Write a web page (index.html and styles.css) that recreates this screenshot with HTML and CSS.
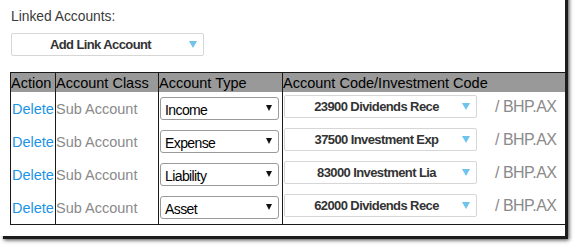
FILE: index.html
```html
<!DOCTYPE html>
<html>
<head>
<meta charset="utf-8">
<link rel="stylesheet" href="styles.css">
</head>
<body>
<div class="card">
  <div class="label">Linked Accounts:</div>
  <div class="dd add"><span class="dd-text">Add Link Account</span><span class="tri"></span></div>
  <table class="links">
    <colgroup>
      <col class="c-action">
      <col class="c-class">
      <col class="c-type">
      <col class="c-code">
    </colgroup>
    <thead>
      <tr><th>Action</th><th>Account Class</th><th>Account Type</th><th>Account Code/Investment Code</th></tr>
    </thead>
    <tbody>
      <tr>
        <td class="t"><a class="del">Delete</a></td>
        <td class="t sub">Sub Account</td>
        <td><div class="sel"><span class="sel-text">Income</span><span class="arr"></span></div></td>
        <td><div class="code-cell"><div class="dd code"><span class="dd-text">23900 Dividends Rece</span><span class="tri"></span></div><span class="inv">/ BHP.AX</span></div></td>
      </tr>
      <tr>
        <td class="t"><a class="del">Delete</a></td>
        <td class="t sub">Sub Account</td>
        <td><div class="sel"><span class="sel-text">Expense</span><span class="arr"></span></div></td>
        <td><div class="code-cell"><div class="dd code"><span class="dd-text">37500 Investment Exp</span><span class="tri"></span></div><span class="inv">/ BHP.AX</span></div></td>
      </tr>
      <tr>
        <td class="t"><a class="del">Delete</a></td>
        <td class="t sub">Sub Account</td>
        <td><div class="sel"><span class="sel-text">Liability</span><span class="arr"></span></div></td>
        <td><div class="code-cell"><div class="dd code"><span class="dd-text">83000 Investment Lia</span><span class="tri"></span></div><span class="inv">/ BHP.AX</span></div></td>
      </tr>
      <tr>
        <td class="t"><a class="del">Delete</a></td>
        <td class="t sub">Sub Account</td>
        <td><div class="sel"><span class="sel-text">Asset</span><span class="arr"></span></div></td>
        <td><div class="code-cell"><div class="dd code"><span class="dd-text">62000 Dividends Rece</span><span class="tri"></span></div><span class="inv">/ BHP.AX</span></div></td>
      </tr>
    </tbody>
  </table>
</div>
</body>
</html>
```

FILE: styles.css
```css
html, body {
  margin: 0;
  padding: 0;
  background: #ffffff;
  overflow: hidden;
}
body {
  font-family: "Liberation Sans", Arial, sans-serif;
  width: 575px;
  height: 246px;
}
.card {
  box-sizing: border-box;
  width: 565px;
  height: 246px;
  margin-top: -10px;
  padding: 19px 0 0 10px;
  background: #ffffff;
  box-shadow: 3px 3px 0 #1c1c1c, 4px 4px 4px rgba(0, 0, 0, 0.75);
  overflow: hidden;
}
.label {
  margin-left: 1px;
  font-size: 13.8px;
  line-height: 16px;
  color: #3a3a3a;
}
.dd {
  box-sizing: border-box;
  display: flex;
  align-items: center;
  height: 23px;
  border: 1px solid #d6d6d6;
  border-radius: 2px;
  background: #ffffff;
  color: #333333;
  font-size: 13px;
  font-weight: bold;
  letter-spacing: -0.6px;
}
.dd-text {
  flex: 1;
  text-align: center;
  white-space: nowrap;
}
.tri {
  width: 0;
  height: 0;
  border-left: 4.5px solid transparent;
  border-right: 4.5px solid transparent;
  border-top: 7px solid #6fc4ec;
  margin: 0 6px 0 0;
}
.add {
  width: 193px;
  margin: 8px 0 0 1px;
}
.links {
  margin-top: 16px;
  width: 560px;
  table-layout: fixed;
  border-collapse: collapse;
  border: 1px solid #1a1a1a;
  font-size: 14.5px;
}
.c-action { width: 45px; }
.c-class { width: 103px; }
.c-type { width: 124px; }
.links th {
  background: #999999;
  color: #000000;
  font-weight: normal;
  text-align: left;
  padding: 1px 0 0 0;
  height: 18px;
  line-height: 18px;
  white-space: nowrap;
  border-left: 1px solid #1a1a1a;
}
.links td {
  height: 33px;
  padding: 0;
  vertical-align: top;
  border-left: 1px solid #1a1a1a;
  white-space: nowrap;
}
.links td.t {
  padding-top: 9px;
  line-height: 17px;
  height: 24px;
}
.del {
  color: #1b94e6;
  padding-left: 1px;
}
.sub {
  color: #8a8a8a;
}
.sel {
  box-sizing: border-box;
  display: flex;
  align-items: center;
  width: 119px;
  height: 23px;
  margin: 5px 0 0 1px;
  padding: 2px 6px 0 4px;
  border: 1px solid #9a9a9a;
  border-radius: 3px;
  color: #000000;
  font-size: 14px;
  letter-spacing: -0.6px;
}
.sel-text {
  flex: 1;
}
.arr {
  width: 0;
  height: 0;
  border-left: 3px solid transparent;
  border-right: 3px solid transparent;
  border-top: 6px solid #111111;
  margin-top: -3px;
}
.code-cell {
  display: flex;
  align-items: flex-start;
  padding-left: 1px;
}
.code {
  width: 193px;
  margin-top: 3px;
}
.code .dd-text {
  padding-left: 6px;
}
.code .tri {
  margin-right: 6px;
}
.inv {
  margin: 6px 0 0 18px;
  font-size: 16px;
  line-height: 18px;
  letter-spacing: -0.5px;
  color: #8a8a8a;
}
```
